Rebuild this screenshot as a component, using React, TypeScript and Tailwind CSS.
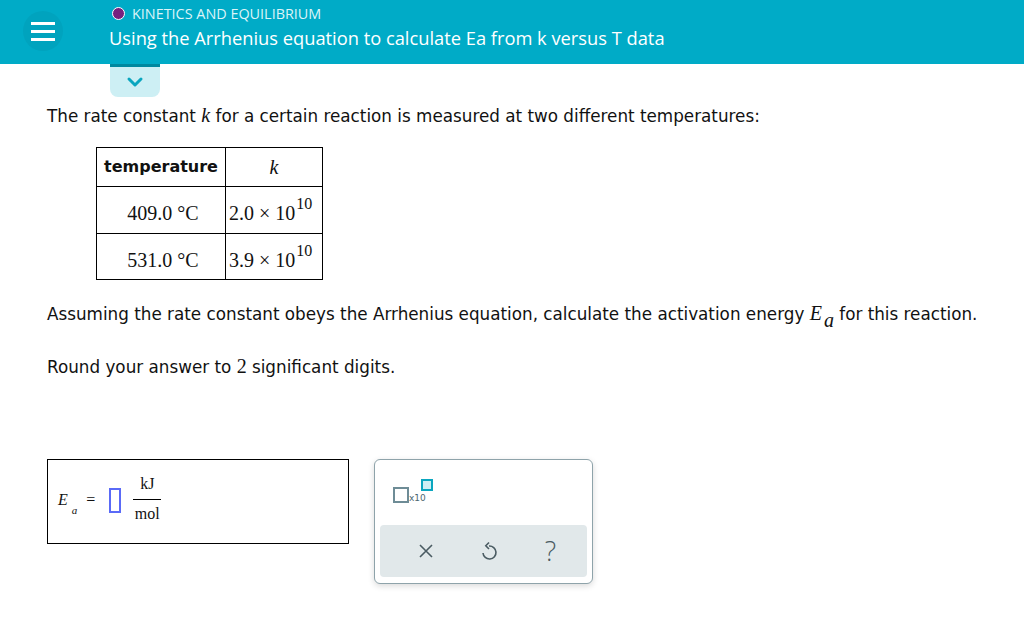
import React from 'react';

const body = { fontFamily: '"DejaVu Sans", Verdana, sans-serif' };
const serif = { fontFamily: '"Liberation Serif", "Times New Roman", serif' };
const head = { fontFamily: '"Open Sans", Lato, sans-serif' };

const Header: React.FC = () => (
  <div className="h-16 bg-[#00abc7] flex items-center" style={head}>
    <div className="ml-[23px] w-10 h-10 rounded-full bg-[#00a3be] flex flex-col items-center justify-center gap-[5px] -mt-[2px]">
      <span className="block w-6 h-[3px] bg-white" />
      <span className="block w-6 h-[3px] bg-white" />
      <span className="block w-6 h-[3px] bg-white" />
    </div>
    <div className="ml-[46px] -mt-[11px]">
      <div className="flex items-center gap-[7px] ml-[3px]">
        <span className="w-[13px] h-[13px] rounded-full bg-[#76227e] border border-white" />
        <span className="text-[14.4px] text-[#dcf4f8] leading-5">KINETICS AND EQUILIBRIUM</span>
      </div>
      <div className="text-[18.3px] text-white mt-[2px] leading-6">
        Using the Arrhenius equation to calculate Ea from k versus T data
      </div>
    </div>
  </div>
);

const Keypad: React.FC = () => (
  <div className="w-[219px] h-[125px] rounded-md border border-[#8ea3aa] bg-white shadow-[0_2px_6px_rgba(0,0,0,0.15)] flex flex-col">
    <div className="h-[65px] relative">
      <div className="absolute left-[18px] top-[27px] w-[16px] h-[16px] border-2 border-[#6e8c96]" />
      <span className="absolute left-[34px] top-[32px] text-[9px] text-[#4b6670]" style={body}>x10</span>
      <div className="absolute left-[46px] top-[19px] w-[12px] h-[12px] border-2 border-[#0aa6bf] bg-[#cdeff4]" />
    </div>
    <div className="mx-[5px] h-[52px] rounded bg-[#e1e8ea] flex items-center justify-around px-2">
      <svg width="18" height="18" viewBox="0 0 18 18" className="ml-[6px]">
        <path d="M3 3 L15 15 M15 3 L3 15" stroke="#4a5b62" strokeWidth="1.6" fill="none" />
      </svg>
      <svg width="18" height="22" viewBox="0 0 18 22" className="mt-[2px]">
        <path d="M8 5 A6.5 6.5 0 1 1 2 12" stroke="#4a5b62" strokeWidth="1.6" fill="none" />
        <path d="M8 1.5 L4.8 4.8 L8 8" stroke="#4a5b62" strokeWidth="1.6" fill="none" />
      </svg>
      <span className="text-[27px] font-light text-[#4a5b62] leading-none -mt-[2px]" style={head}>?</span>
    </div>
  </div>
);

export default function App() {
  return (
    <div className="w-[1024px] h-[642px] bg-white overflow-hidden">
      <Header />
      <div className="ml-[110px] w-[50px] h-[33px] bg-[#cdeff4] border-t-[3px] border-[#00889f] rounded-b-lg flex items-center justify-center">
        <svg width="18" height="12" viewBox="0 0 18 12">
          <path d="M3 3 L9 9 L15 3" stroke="#0aa6bf" strokeWidth="3" fill="none" strokeLinecap="round" strokeLinejoin="round" />
        </svg>
      </div>

      <div className="pl-[47px] text-[16.8px] text-[#111] pt-[6px]" style={body}>
        <p className="leading-6">
          The rate constant <span className="italic text-[20px]" style={serif}>k</span> for a certain reaction is measured at two different temperatures:
        </p>

        <table className="ml-[49px] mt-[19px] border-collapse border border-black">
          <tbody>
            <tr className="h-[39px]">
              <td className="border border-black w-[129px] text-center font-bold px-1 text-[16px]">temperature</td>
              <td className="border border-black w-[97px] text-center italic text-[20px]" style={serif}>k</td>
            </tr>
            <tr className="h-[47px]">
              <td className="border border-black text-center text-[20px] pt-[6px] pl-[4px]" style={serif}>409.0 °C</td>
              <td className="border border-black text-left pl-[3px] text-[20px] pt-[6px] whitespace-nowrap" style={serif}>
                2.0 × 10<sup className="text-[16px] relative -top-[11px] ml-[1px]">10</sup>
              </td>
            </tr>
            <tr className="h-[46px]">
              <td className="border border-black text-center text-[20px] pt-[6px] pl-[4px]" style={serif}>531.0 °C</td>
              <td className="border border-black text-left pl-[3px] text-[20px] pt-[6px] whitespace-nowrap" style={serif}>
                3.9 × 10<sup className="text-[16px] relative -top-[11px] ml-[1px]">10</sup>
              </td>
            </tr>
          </tbody>
        </table>

        <p className="mt-[21px] leading-6">
          Assuming the rate constant obeys the Arrhenius equation, calculate the activation energy{' '}
          <span className="italic text-[20px]" style={serif}>E</span>
          <sub className="italic text-[20px] -bottom-[7px] ml-[2px]" style={serif}>a</sub> for this reaction.
        </p>

        <p className="mt-[28px] leading-6">
          Round your answer to <span className="text-[20px]" style={serif}>2</span> significant digits.
        </p>

        <div className="flex items-start mt-[80px] gap-[25px]">
          <div className="w-[302px] h-[85px] border border-black flex items-center pl-[10px]" style={serif}>
            <span className="italic text-[16px] -mt-[3px]">E</span>
            <sub className="italic text-[11px] relative top-[8px] ml-[4px]">a</sub>
            <span className="text-[16px] ml-[9px] -mt-[4px]">=</span>
            <span className="ml-[14px] w-[12px] h-[25px] border-2 border-[#5a6af7] -mt-[2px]" />
            <span className="ml-[12px] flex flex-col items-center text-[16px] leading-5 -mt-[6px]">
              <span>kJ</span>
              <span className="w-[28px] border-t border-black mt-[5px] mb-[4px]" />
              <span>mol</span>
            </span>
          </div>
          <Keypad />
        </div>
      </div>
    </div>
  );
}
